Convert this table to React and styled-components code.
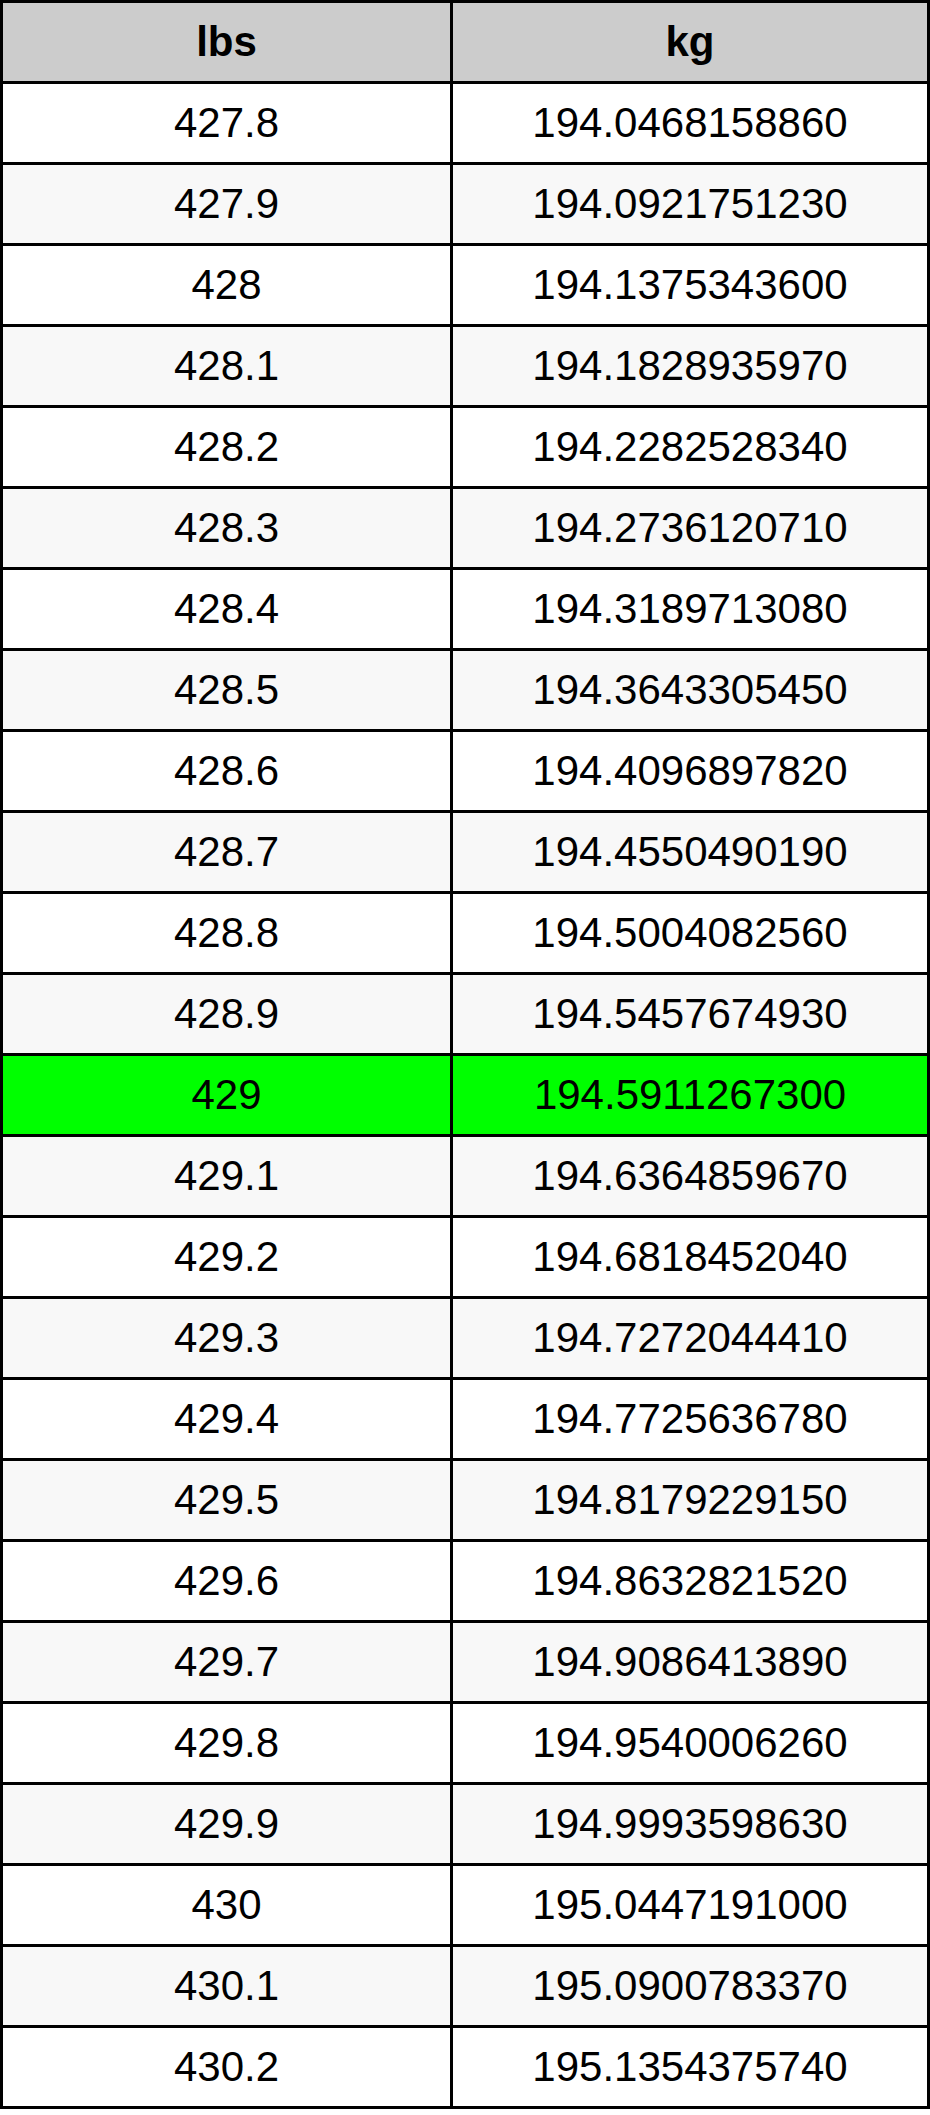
import React from "react";
import styled, { createGlobalStyle } from "styled-components";

const GlobalStyle = createGlobalStyle`
  body {
    margin: 0;
    background: #ffffff;
    font-family: "Liberation Sans", Arial, Helvetica, sans-serif;
  }
`;

const Table = styled.table`
  width: 930px;
  border-collapse: separate;
  border-spacing: 3px;
  background-color: #000;
  table-layout: fixed;
`;

const HeadCell = styled.th`
  height: 78px;
  padding: 0;
  background-color: #cccccc;
  color: #000;
  font-size: 42px;
  font-weight: bold;
  text-align: center;
  vertical-align: middle;
  width: ${(p) => p.$w}px;
`;

const Cell = styled.td`
  height: 78px;
  padding: 0;
  background-color: ${(p) =>
    p.$highlight ? "#00ff00" : p.$even ? "#f8f8f8" : "#ffffff"};
  color: #000;
  font-size: 42px;
  text-align: center;
  vertical-align: middle;
`;

const rows = [
  ["427.8", "194.0468158860"],
  ["427.9", "194.0921751230"],
  ["428", "194.1375343600"],
  ["428.1", "194.1828935970"],
  ["428.2", "194.2282528340"],
  ["428.3", "194.2736120710"],
  ["428.4", "194.3189713080"],
  ["428.5", "194.3643305450"],
  ["428.6", "194.4096897820"],
  ["428.7", "194.4550490190"],
  ["428.8", "194.5004082560"],
  ["428.9", "194.5457674930"],
  ["429", "194.5911267300"],
  ["429.1", "194.6364859670"],
  ["429.2", "194.6818452040"],
  ["429.3", "194.7272044410"],
  ["429.4", "194.7725636780"],
  ["429.5", "194.8179229150"],
  ["429.6", "194.8632821520"],
  ["429.7", "194.9086413890"],
  ["429.8", "194.9540006260"],
  ["429.9", "194.9993598630"],
  ["430", "195.0447191000"],
  ["430.1", "195.0900783370"],
  ["430.2", "195.1354375740"],
];

const App = () => {
  return (
    <>
      <GlobalStyle />
      <Table>
        <thead>
          <tr>
            <HeadCell $w={447}>lbs</HeadCell>
            <HeadCell $w={474}>kg</HeadCell>
          </tr>
        </thead>
        <tbody>
          {rows.map(([lbs, kg], i) => {
            const highlight = lbs === "429";
            const even = i % 2 === 1;
            return (
              <tr key={lbs}>
                <Cell $highlight={highlight} $even={even}>{lbs}</Cell>
                <Cell $highlight={highlight} $even={even}>{kg}</Cell>
              </tr>
            );
          })}
        </tbody>
      </Table>
    </>
  );
};

export default App;
